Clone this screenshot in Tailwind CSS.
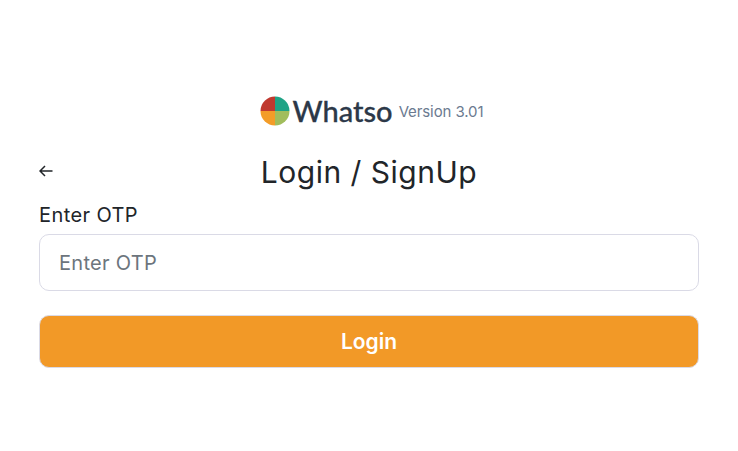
<!DOCTYPE html>
<html lang="en">
<head>
    <meta charset="UTF-8">
    <meta name="viewport" content="width=device-width, initial-scale=1.0">
    <title>Login - Whatso</title>
    <script src="https://cdn.jsdelivr.net/npm/@tailwindcss/browser@4"></script>
</head>
<body class="bg-white font-['Inter',sans-serif]">
    <main class="w-[738px] h-[451px] px-[39px] pt-[95px] overflow-hidden">
        <!-- Logo -->
        <div class="flex items-center justify-center h-[31px] pl-[5px]">
            <svg class="w-[30px] h-[30px]" viewBox="0 0 30 30">
                <path d="M15 15V0.500A14.500 14.500 0 0 0 0.500 15Z" fill="#c0392f"/>
                <path d="M15 15V0.500A14.500 14.500 0 0 1 29.500 15Z" fill="#1fa386"/>
                <path d="M15 15H0.500A14.500 14.500 0 0 0 15 29.500Z" fill="#f39c28"/>
                <path d="M15 15H29.500A14.500 14.500 0 0 1 15 29.500Z" fill="#a1bd5c"/>
            </svg>
            <span class="ml-[3px] font-['Lato',sans-serif] text-[29px] leading-none font-medium text-[#2c3848] [-webkit-text-stroke:0.3px_#2c3848]">Whatso</span>
            <span class="ml-[6px] mt-[1px] text-[15px] leading-none tracking-[-0.1px] text-[#6b7a90]">Version 3.01</span>
        </div>

        <!-- Heading -->
        <div class="relative h-[48px] mt-[22px] flex items-center justify-center">
            <button class="absolute left-0 top-[16px] text-[#212529]">
                <svg class="w-[14px] h-[14px]" viewBox="0 0 14 14" fill="none" stroke="currentColor" stroke-width="1.500">
                    <path d="M13.500 7H1M6 2L1 7L6 12"/>
                </svg>
            </button>
            <h1 class="text-[30px] leading-none tracking-[0.5px] text-[#212529]">Login / SignUp</h1>
        </div>

        <!-- OTP form -->
        <form>
            <label class="block mt-[6px] h-[32px] text-[20px] leading-[27px] tracking-[0.4px] text-[#212529]">Enter OTP</label>
            <input type="text" placeholder="Enter OTP" class="block w-full h-[57px] px-[19px] bg-white border border-[#dadae6] rounded-[10px] text-[20px] tracking-[0.3px] text-[#212529] placeholder:text-[#6c757d]">
            <button type="button" class="block w-full h-[53px] mt-[24px] bg-[#f29927] border border-[#dadae6] rounded-[10px] text-[21px] font-semibold text-white">Login</button>
        </form>
    </main>
</body>
</html>
